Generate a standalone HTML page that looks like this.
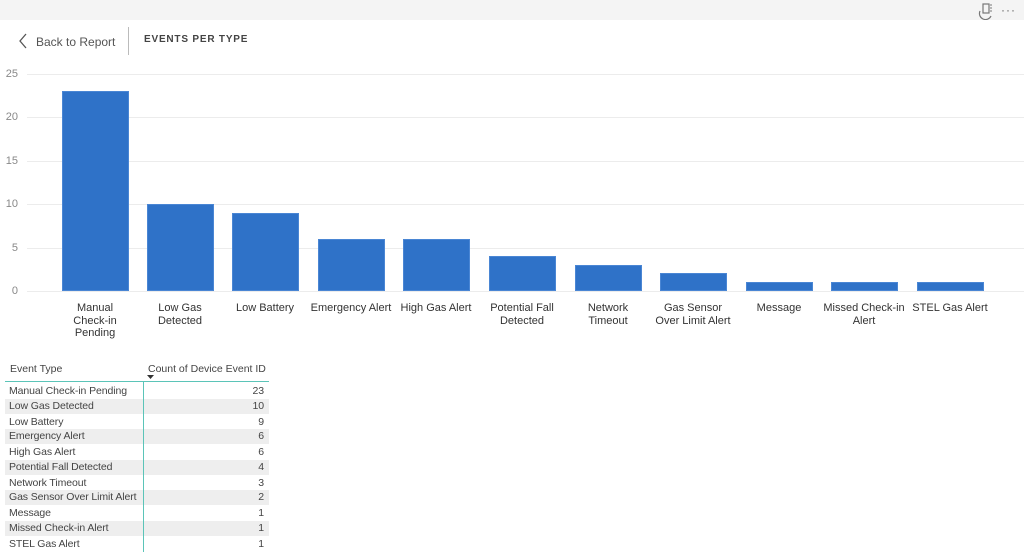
<!DOCTYPE html>
<html><head><meta charset="utf-8"><style>
*{margin:0;padding:0;box-sizing:border-box}
body{width:1024px;height:560px;background:#fff;position:relative;overflow:hidden;font-family:"Liberation Sans",sans-serif;color:#333}
.a{position:absolute}
.grid{position:absolute;left:27px;width:997px;height:1px;background:#ececec}
.yl{position:absolute;left:0;width:18px;text-align:right;font-size:11px;color:#888;line-height:12px}
.bar{position:absolute;width:67px;background:#2f72c8;border:1px solid #4a86d4}
.xl{position:absolute;top:302px;width:90px;text-align:center;font-size:11px;line-height:12.5px;color:#333}
.row{position:absolute;left:5px;width:264px;height:15px;font-size:10.5px;line-height:15px;color:#444;letter-spacing:-0.1px}
.row.g{background:#eeeeee}
.row span{position:absolute;left:4px}
.row b{position:absolute;right:5px;font-weight:normal}
</style></head><body>
<div class="a" style="left:0;top:0;width:1024px;height:20px;background:#f4f4f4"></div>
<svg class="a" style="left:977px;top:2px" width="20" height="18" viewBox="0 0 20 18"><rect x="6" y="2" width="6" height="9" fill="none" stroke="#777" stroke-width="1.2"/><path d="M13 3h2M13 6h2M13 9h2" stroke="#777"/><path d="M3 9 a6 6 0 0 0 11 5" fill="none" stroke="#777" stroke-width="1.2"/></svg>
<div class="a" style="left:1001px;top:3px;font-size:12px;color:#666;letter-spacing:1px">···</div>
<svg class="a" style="left:18px;top:33px" width="10" height="16" viewBox="0 0 10 16"><path d="M8 1 L2 8 L8 15" fill="none" stroke="#555" stroke-width="1.3"/></svg>
<div class="a" style="left:36px;top:35px;font-size:12px;color:#555">Back to Report</div>
<div class="a" style="left:128px;top:27px;width:1px;height:28px;background:#bbb"></div>
<div class="a" style="left:144px;top:34px;font-size:10px;font-weight:bold;color:#444;letter-spacing:.8px">EVENTS PER TYPE</div>

<div class="grid" style="top:74px"></div><div class="yl" style="top:68px">25</div>
<div class="grid" style="top:117px"></div><div class="yl" style="top:111px">20</div>
<div class="grid" style="top:161px"></div><div class="yl" style="top:155px">15</div>
<div class="grid" style="top:204px"></div><div class="yl" style="top:198px">10</div>
<div class="grid" style="top:248px"></div><div class="yl" style="top:242px">5</div>
<div class="grid" style="top:291px"></div><div class="yl" style="top:285px">0</div>

<div class="bar" style="left:62px;top:91px;height:200px"></div>
<div class="bar" style="left:147px;top:204px;height:87px"></div>
<div class="bar" style="left:232px;top:213px;height:78px"></div>
<div class="bar" style="left:318px;top:239px;height:52px"></div>
<div class="bar" style="left:403px;top:239px;height:52px"></div>
<div class="bar" style="left:489px;top:256px;height:35px"></div>
<div class="bar" style="left:575px;top:265px;height:26px"></div>
<div class="bar" style="left:660px;top:273px;height:18px"></div>
<div class="bar" style="left:746px;top:282px;height:9px"></div>
<div class="bar" style="left:831px;top:282px;height:9px"></div>
<div class="bar" style="left:917px;top:282px;height:9px"></div>

<div class="xl" style="left:50px">Manual<br>Check-in<br>Pending</div>
<div class="xl" style="left:135px">Low Gas<br>Detected</div>
<div class="xl" style="left:220px">Low Battery</div>
<div class="xl" style="left:306px">Emergency Alert</div>
<div class="xl" style="left:391px">High Gas Alert</div>
<div class="xl" style="left:477px">Potential Fall<br>Detected</div>
<div class="xl" style="left:563px">Network<br>Timeout</div>
<div class="xl" style="left:643px;width:100px">Gas Sensor<br>Over Limit Alert</div>
<div class="xl" style="left:734px">Message</div>
<div class="xl" style="left:819px">Missed Check-in<br>Alert</div>
<div class="xl" style="left:905px">STEL Gas Alert</div>

<div class="a" style="left:10px;top:363px;font-size:10.5px;color:#444">Event Type</div>
<div class="a" style="left:148px;top:363px;font-size:10.5px;color:#444">Count of Device Event ID</div>
<svg class="a" style="left:147px;top:375px" width="8" height="5"><path d="M0 0h7l-3.5 4z" fill="#333"/></svg>
<div class="a" style="left:5px;top:381px;width:264px;height:1px;background:#5bc4b8"></div>

<div class="row" style="top:384px"><span>Manual Check-in Pending</span><b>23</b></div>
<div class="row g" style="top:399px"><span>Low Gas Detected</span><b>10</b></div>
<div class="row" style="top:415px"><span>Low Battery</span><b>9</b></div>
<div class="row g" style="top:429px"><span>Emergency Alert</span><b>6</b></div>
<div class="row" style="top:445px"><span>High Gas Alert</span><b>6</b></div>
<div class="row g" style="top:460px"><span>Potential Fall Detected</span><b>4</b></div>
<div class="row" style="top:476px"><span>Network Timeout</span><b>3</b></div>
<div class="row g" style="top:490px"><span>Gas Sensor Over Limit Alert</span><b>2</b></div>
<div class="row" style="top:506px"><span>Message</span><b>1</b></div>
<div class="row g" style="top:521px"><span>Missed Check-in Alert</span><b>1</b></div>
<div class="row" style="top:537px"><span>STEL Gas Alert</span><b>1</b></div>
<div class="a" style="left:143px;top:382px;width:1px;height:170px;background:#5bc4b8"></div>
</body></html>
